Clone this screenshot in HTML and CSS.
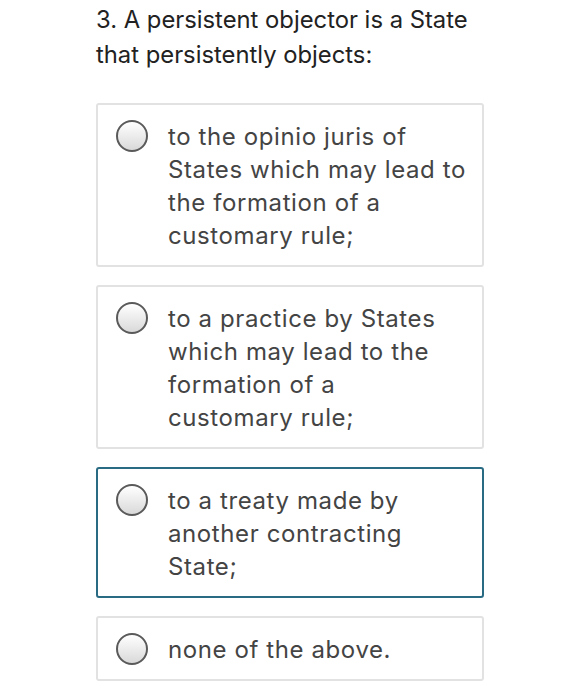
FILE: index.html
```html
<!DOCTYPE html>
<html>
<head>
<meta charset="utf-8">
<link rel="stylesheet" href="styles.css">
</head>
<body>
<div class="question">
  <p class="title">3. A persistent objector is a State that persistently objects:</p>
  <div class="options">
    <label class="option">
      <span class="radio"></span>
      <span class="text">to the opinio juris of<br>States which may lead to<br>the formation of a<br>customary rule;</span>
    </label>
    <label class="option">
      <span class="radio"></span>
      <span class="text">to a practice by States<br>which may lead to the<br>formation of a<br>customary rule;</span>
    </label>
    <label class="option focused">
      <span class="radio"></span>
      <span class="text">to a treaty made by<br>another contracting<br>State;</span>
    </label>
    <label class="option">
      <span class="radio"></span>
      <span class="text">none of the above.</span>
    </label>
  </div>
</div>
</body>
</html>
```

FILE: styles.css
```css
html, body {
  margin: 0;
  padding: 0;
  background: #ffffff;
}
body {
  font-family: Inter, "Liberation Sans", Arial, sans-serif;
}
.question {
  margin-left: 96px;
  width: 388px;
  padding-top: 2px;
}
.title {
  margin: 0;
  font-size: 23.8px;
  line-height: 35px;
  color: #222222;
  width: 400px;
}
.options {
  margin-top: 31px;
  display: flex;
  flex-direction: column;
  gap: 18px;
}
.option {
  display: flex;
  align-items: flex-start;
  border: 2px solid #e2e2e2;
  border-radius: 3px;
  padding: 15px 6px 13px 18px;
}
.option.focused {
  border-color: #2a6b84;
}
.radio {
  flex: none;
  width: 28px;
  height: 28px;
  margin-top: 0px;
  margin-right: 20px;
  border: 2px solid #5a5a5a;
  border-radius: 50%;
  background: linear-gradient(#ffffff, #d9d9d9);
}
.text {
  font-size: 24px;
  line-height: 33px;
  letter-spacing: 0.6px;
  color: #444444;
  white-space: nowrap;
}
```
